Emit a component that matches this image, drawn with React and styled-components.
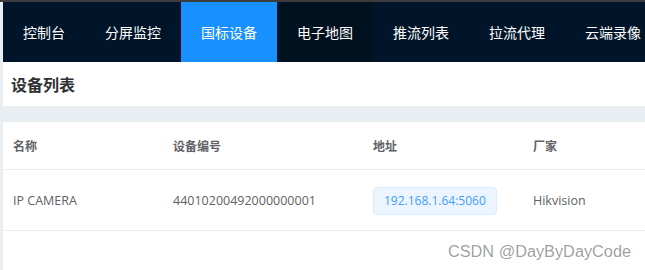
import React from "react";
import styled, { createGlobalStyle } from "styled-components";

const GlobalStyle = createGlobalStyle`
  html, body { margin: 0; padding: 0; background: #ffffff; }
  body {
    font-family: "Open Sans", "Noto Sans CJK SC", sans-serif;
    -webkit-font-smoothing: antialiased;
  }
  * { box-sizing: border-box; }
`;

const Page = styled.div`
  width: 645px;
  height: 270px;
  overflow: hidden;
  position: relative;
  display: flex;
  flex-direction: column;
  background: #e9eef3;
`;

const TopEdge = styled.div`
  height: 2px;
  flex: none;
  background: #3c3c3c;
`;

const Main = styled.div`
  flex: 1;
  display: flex;
  flex-direction: column;
  padding-left: 3px;
  min-width: 0;
`;

const Nav = styled.nav`
  height: 60px;
  flex: none;
  display: flex;
  background: #001529;
  white-space: nowrap;
`;

const NavItem = styled.div`
  flex: none;
  display: flex;
  align-items: center;
  padding: 0 20px;
  font-family: "Noto Sans CJK SC", sans-serif;
  font-size: 14px;
  color: #ffffff;
  background: ${(p) => (p.$active ? "#1890ff" : p.$hover ? "#001120" : "transparent")};
`;

const TitleBar = styled.div`
  height: 44px;
  flex: none;
  display: flex;
  align-items: center;
  padding-left: 8px;
  background: #ffffff;
  font-family: "Noto Sans CJK SC", sans-serif;
  font-size: 16px;
  font-weight: 600;
  color: #303133;
`;

const Table = styled.div`
  margin-top: 16px;
  flex: 1;
  background: #ffffff;
  display: flex;
  flex-direction: column;
`;

const Row = styled.div`
  display: grid;
  grid-template-columns: 160px 200px 160px 1fr;
  height: ${(p) => (p.$head ? "48px" : "61px")};
  border-bottom: 1px solid #ebeef5;
  align-items: center;
`;

const Cell = styled.div`
  padding: 0 10px;
  font-size: ${(p) => (p.$head ? "12px" : "12.5px")};
  font-family: ${(p) => (p.$head ? '"Noto Sans CJK SC", sans-serif' : '"Open Sans", "Noto Sans CJK SC", sans-serif')};
  font-weight: ${(p) => (p.$head ? 600 : 400)};
  color: #606266;
  white-space: nowrap;
  padding-top: ${(p) => (p.$head ? "0" : "1px")};
`;

const Tag = styled.span`
  display: inline-flex;
  align-items: center;
  height: 28px;
  padding: 0 10px;
  border: 1px solid #d9ecff;
  border-radius: 4px;
  background: #ecf5ff;
  color: #409eff;
  font-size: 12px;
  font-family: "Open Sans", sans-serif;
`;

const Watermark = styled.div`
  position: absolute;
  right: 14px;
  bottom: 9px;
  font-family: "Liberation Sans", Arial, sans-serif;
  font-size: 16.3px;
  color: rgba(0, 0, 0, 0.4);
  pointer-events: none;
`;

const navItems = ["控制台", "分屏监控", "国标设备", "电子地图", "推流列表", "拉流代理", "云端录像"];

export default function App() {
  return (
    <>
      <GlobalStyle />
      <Page>
        <TopEdge />
        <Main>
          <Nav>
            {navItems.map((n) => (
              <NavItem key={n} $active={n === "国标设备"} $hover={n === "电子地图"}>
                {n}
              </NavItem>
            ))}
          </Nav>
          <TitleBar>设备列表</TitleBar>
          <Table>
            <Row $head>
              <Cell $head>名称</Cell>
              <Cell $head>设备编号</Cell>
              <Cell $head>地址</Cell>
              <Cell $head>厂家</Cell>
            </Row>
            <Row>
              <Cell>IP CAMERA</Cell>
              <Cell>44010200492000000001</Cell>
              <Cell>
                <Tag>192.168.1.64:5060</Tag>
              </Cell>
              <Cell>Hikvision</Cell>
            </Row>
          </Table>
        </Main>
        <Watermark>CSDN @DayByDayCode</Watermark>
      </Page>
    </>
  );
}
